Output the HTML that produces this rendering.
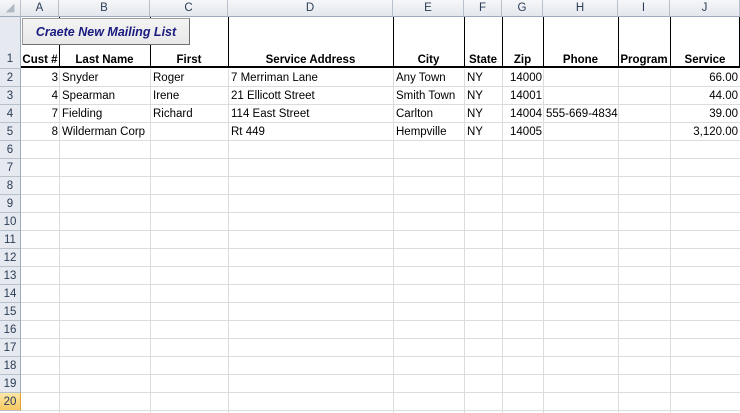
<!DOCTYPE html>
<html><head><style>
body{margin:0;width:740px;height:413px;overflow:hidden;background:#fff;font-family:"Liberation Sans",Arial,sans-serif;font-size:11.5px;position:relative}
div{position:absolute;box-sizing:border-box}
.ch{top:0;height:17px;background:linear-gradient(#f6f7f9,#e3e7ed);border-right:1px solid #b8c0cc;border-bottom:1px solid #9eabbc;text-align:center;line-height:17px;color:#2a3c55;font-size:11.5px}
.rh{left:0;width:21px;height:18px;background:#e6eaf0;border-bottom:1px solid #b8c0cc;border-right:1px solid #9eabbc;text-align:center;line-height:18px;color:#2a3c55;font-size:11.5px}
.vl{width:1px;background:#dadcdd;top:69px;height:344px}
.bl{width:1px;background:#000;top:17px;height:51px}
.t{height:18px;line-height:19px;white-space:nowrap;color:#000}
.h{top:52px;height:16px;line-height:17px;font-weight:bold;text-align:center}
.r{text-align:right}
</style></head><body>
<div style="left:21px;top:69px;width:719px;height:344px;background:repeating-linear-gradient(to bottom,transparent 0,transparent 17px,#dadcdd 17px,#dadcdd 18px)"></div>
<div class="ch" style="left:0;width:21px;color:#b0b8c4">◢</div>
<div class="ch" style="left:21px;width:38px">A</div>
<div class="ch" style="left:59px;width:91px">B</div>
<div class="ch" style="left:150px;width:78px">C</div>
<div class="ch" style="left:228px;width:165px">D</div>
<div class="ch" style="left:393px;width:71px">E</div>
<div class="ch" style="left:464px;width:38px">F</div>
<div class="ch" style="left:502px;width:41px">G</div>
<div class="ch" style="left:543px;width:75px">H</div>
<div class="ch" style="left:618px;width:52px">I</div>
<div class="ch" style="left:670px;width:70px">J</div>
<div class="rh" style="top:17px;height:52px;line-height:84px">1</div>
<div class="rh" style="top:69px">2</div><div class="rh" style="top:87px">3</div><div class="rh" style="top:105px">4</div><div class="rh" style="top:123px">5</div><div class="rh" style="top:141px">6</div><div class="rh" style="top:159px">7</div><div class="rh" style="top:177px">8</div><div class="rh" style="top:195px">9</div><div class="rh" style="top:213px">10</div><div class="rh" style="top:231px">11</div><div class="rh" style="top:249px">12</div><div class="rh" style="top:267px">13</div><div class="rh" style="top:285px">14</div><div class="rh" style="top:303px">15</div><div class="rh" style="top:321px">16</div><div class="rh" style="top:339px">17</div><div class="rh" style="top:357px">18</div><div class="rh" style="top:375px">19</div>
<div class="rh" style="top:393px;background:linear-gradient(#fde8a8,#f7c862);border-right:1px solid #e0a030">20</div>
<div class="vl" style="left:59px"></div><div class="vl" style="left:150px"></div><div class="vl" style="left:228px"></div><div class="vl" style="left:393px"></div><div class="vl" style="left:464px"></div><div class="vl" style="left:502px"></div><div class="vl" style="left:543px"></div><div class="vl" style="left:618px"></div><div class="vl" style="left:670px"></div>
<div class="bl" style="left:59px"></div><div class="bl" style="left:150px"></div><div class="bl" style="left:228px"></div><div class="bl" style="left:393px"></div><div class="bl" style="left:464px"></div><div class="bl" style="left:502px"></div><div class="bl" style="left:543px"></div><div class="bl" style="left:618px"></div><div class="bl" style="left:670px"></div><div class="bl" style="left:739px"></div>
<div style="left:21px;top:66px;width:719px;height:2px;background:#000"></div>
<div style="left:22px;top:18px;width:168px;height:27px;background:linear-gradient(#f4f4f4,#e8e8e8);border:1px solid #a0a0a0;border-right-color:#707070;border-bottom-color:#707070;text-align:center;line-height:26px;font-weight:bold;font-style:italic;color:#1a1a80;font-size:12.5px">Craete New Mailing List</div>
<div class="t h" style="left:21px;width:38px">Cust #</div>
<div class="t h" style="left:59px;width:91px">Last Name</div>
<div class="t h" style="left:150px;width:78px">First</div>
<div class="t h" style="left:228px;width:165px">Service Address</div>
<div class="t h" style="left:393px;width:71px">City</div>
<div class="t h" style="left:464px;width:38px">State</div>
<div class="t h" style="left:502px;width:41px">Zip</div>
<div class="t h" style="left:543px;width:75px">Phone</div>
<div class="t h" style="left:618px;width:52px">Program</div>
<div class="t h" style="left:670px;width:70px">Service</div>

<div class="t r" style="left:21px;top:69px;width:37px">3</div><div class="t" style="left:62px;top:69px">Snyder</div><div class="t" style="left:153px;top:69px">Roger</div><div class="t" style="left:231px;top:69px">7 Merriman Lane</div><div class="t" style="left:396px;top:69px">Any Town</div><div class="t" style="left:467px;top:69px">NY</div><div class="t r" style="left:502px;top:69px;width:40px">14000</div><div class="t r" style="left:670px;top:69px;width:68px">66.00</div>
<div class="t r" style="left:21px;top:87px;width:37px">4</div><div class="t" style="left:62px;top:87px">Spearman</div><div class="t" style="left:153px;top:87px">Irene</div><div class="t" style="left:231px;top:87px">21 Ellicott Street</div><div class="t" style="left:396px;top:87px">Smith Town</div><div class="t" style="left:467px;top:87px">NY</div><div class="t r" style="left:502px;top:87px;width:40px">14001</div><div class="t r" style="left:670px;top:87px;width:68px">44.00</div>
<div class="t r" style="left:21px;top:105px;width:37px">7</div><div class="t" style="left:62px;top:105px">Fielding</div><div class="t" style="left:153px;top:105px">Richard</div><div class="t" style="left:231px;top:105px">114 East Street</div><div class="t" style="left:396px;top:105px">Carlton</div><div class="t" style="left:467px;top:105px">NY</div><div class="t r" style="left:502px;top:105px;width:40px">14004</div><div class="t" style="left:546px;top:105px">555-669-4834</div><div class="t r" style="left:670px;top:105px;width:68px">39.00</div>
<div class="t r" style="left:21px;top:123px;width:37px">8</div><div class="t" style="left:62px;top:123px">Wilderman Corp</div><div class="t" style="left:231px;top:123px">Rt 449</div><div class="t" style="left:396px;top:123px">Hempville</div><div class="t" style="left:467px;top:123px">NY</div><div class="t r" style="left:502px;top:123px;width:40px">14005</div><div class="t r" style="left:670px;top:123px;width:68px">3,120.00</div>
</body></html>
